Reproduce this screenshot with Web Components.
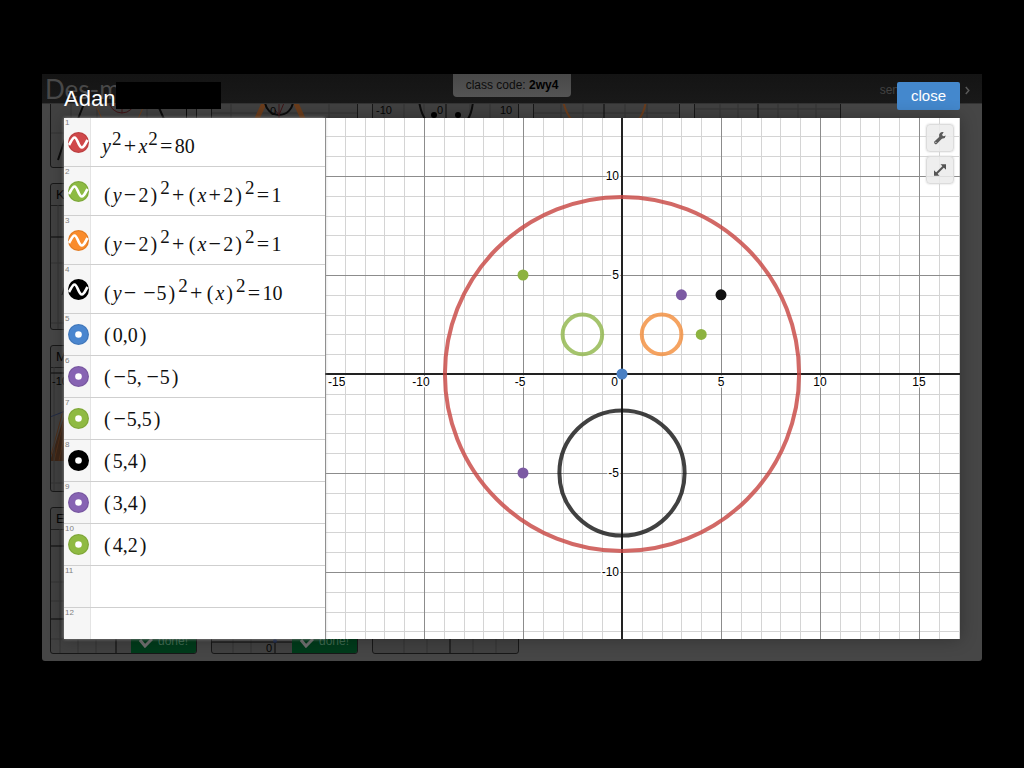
<!DOCTYPE html>
<html lang="en">
<head>
<meta charset="utf-8">
<title>Class graphs</title>
<style>
  html, body { margin: 0; background: #000; font-family: "Liberation Sans", Arial, sans-serif; }
</style>
</head>
<body>
<class-app></class-app>

<script>
const define = (name, html, setup) => {
  const template = document.createElement('template');
  template.innerHTML = html;
  customElements.define(name, class extends HTMLElement {
    connectedCallback() {
      if (this.shadowRoot) return;
      this.attachShadow({ mode: 'open' }).append(template.content.cloneNode(true));
      if (setup) setup(this.shadowRoot, this);
    }
  });
};

/* Top bar of the class page */
define('class-header', `
  <style>
    :host { display: grid; grid-template-columns: 1fr auto 1fr; height: 30px; background: linear-gradient(#141414, #191919); border-bottom: 1px solid #333; box-sizing: border-box; }
    .logo { font: 26px/30px Lato, sans-serif; color: #484848; padding-left: 3px; white-space: nowrap; }
    .code { height: 23px; box-sizing: border-box; padding: 0 13px; border-radius: 0 0 4px 4px; background: linear-gradient(#484848, #545454); color: #0c0c0c; font-size: 12px; line-height: 23px; white-space: nowrap; }
    .code b { color: #000; }
    .send { display: flex; justify-content: flex-end; align-items: center; gap: 66px; padding-right: 12px; color: #424242; font-size: 12px; line-height: 32px; }
    svg { display: block; }
  </style>
  <div class="logo">Des-m</div>
  <div class="code">class code: <b>2wy4</b></div>
  <div class="send"><span>sen</span>
    <svg width="5" height="9" viewBox="0 0 5 9" fill="none" stroke="#585858" stroke-width="1.5"><path d="M.8 1l3 3.5-3 3.5"/></svg>
  </div>`);

/* One student's thumbnail */
define('student-card', `
  <style>
    :host { display: grid; grid-template: 22px 1fr / 1fr; box-sizing: border-box; position: relative; height: 147px; border: 1px solid #181818; border-radius: 3px; overflow: hidden; background: #414141; }
    .name { padding-left: 5px; font-size: 13px; line-height: 21px; color: #050505; border-bottom: 1px solid #202020; }
    ::slotted(svg) { position: absolute; left: -1px; top: -1px; width: 147px; height: 147px; }
    .done { display: none; position: absolute; right: 0; bottom: 0; width: 65px; height: 24px; box-sizing: border-box; padding: 0 8px; background: #003b1b; color: #3f6a50; font-size: 12px; line-height: 22px; align-items: center; justify-content: space-between; }
    :host([done]) .done { display: flex; }
  </style>
  <div class="name"><slot name="name"></slot></div>
  <slot></slot>
  <div class="done"><svg width="14" height="14" viewBox="0 0 14 14" fill="none" stroke="#707070" stroke-width="3"><path d="M1 6l5 6 7-7"/></svg><span>done!</span></div>`);

define('card-wall', `
  <style>
    :host { display: grid; grid-template-columns: repeat(5, 147px); column-gap: 14px; row-gap: 15px; align-content: end; padding: 0 8px; overflow: hidden; box-sizing: border-box; }
    text { font: 11px "Liberation Sans", Arial, sans-serif; fill: #050505; }
    .g { stroke: #343434; } .k { stroke: #0b0b0b; } .o { stroke: #6b3d1c; } .r { stroke: #3f1416; }
  </style>
  <student-card><svg viewBox="0 0 147 147" fill="none">
    <path class="g" d="M0 112H147M21 22V147M47 22V147M97 22V147"/>
    <path class="k" stroke-width="2" d="M35 80l-7 18M106 80l8 18M8 139l8-24"/>
    <path class="o" d="M44 80l8 18M96 80l-8 18"/>
    <circle class="r" cx="72" cy="79" r="13"/><path class="r" d="M72 75v17M60 84h25"/>
    <path class="k" d="M136.500 82V147"/></svg></student-card>
  <student-card><svg viewBox="0 0 147 147" fill="none">
    <path class="g" d="M0 92H147M20 22V147M118 22V147"/>
    <path class="o" stroke-width="5" d="M55 78l-10 22M83 78l10 22"/>
    <circle class="k" cx="68" cy="80" r="14" stroke-width="2"/><path class="r" d="M68 80v17M64 89l4 5 5-12"/>
    <text x="59" y="94">0</text></svg></student-card>
  <student-card><svg viewBox="0 0 147 147" fill="none">
    <path class="g" d="M12 22V147M32 22V147M52 22V147M98 22V147M118 22V147"/>
    <path class="k" d="M74 22V147"/><path class="k" stroke-width="2" d="M47 80q2 13 7 19M101 80q-1 13-6 19"/>
    <circle cx="62" cy="94" r="3" fill="#000"/><circle cx="86" cy="94" r="3" fill="#000"/>
    <text x="4" y="93">-10</text><text x="65" y="93">0</text><text x="128" y="93">10</text></svg></student-card>
  <student-card><svg viewBox="0 0 147 147" fill="none">
    <path class="g" d="M0 92H147M28 22V147M50 22V147M92 22V147M114 22V147"/>
    <path class="k" d="M71 22V147"/><path class="o" stroke-width="2" d="M30 80q3 12 8 18M113 80q-2 12-7 18"/></svg></student-card>
  <student-card><svg viewBox="0 0 147 147" fill="none">
    <path class="g" d="M0 88H147M26 22V147M44 22V147M84 22V147M104 22V147M122 22V147"/>
    <path class="k" d="M64 22V147"/></svg></student-card>

  <student-card style="grid-column: 1"><span slot="name">K</span><svg viewBox="0 0 147 147" fill="none">
    <path class="g" d="M0 80H20M0 140H20M8 22V147"/><path class="k" d="M0 54H20M12 112l3-10"/></svg></student-card>
  <student-card style="grid-column: 1"><span slot="name">M</span><svg viewBox="0 0 147 147" fill="none">
    <path d="M0 116L20 52V116z" fill="#3c2618"/><path d="M1 110l12-44M4 116l12-50M9 116l8-40" stroke="#50301a"/>
    <path class="g" d="M0 138H20M4 22V147"/><path class="k" d="M0 28H20"/><path d="M0 72L18 65" stroke="#222b45"/>
    <text x="2" y="40">-10</text></svg></student-card>
  <student-card style="grid-column: 1" done><span slot="name">E</span><svg viewBox="0 0 147 147" fill="none">
    <path class="g" d="M0 75H20M0 94H20M0 132H147M10 22V147M28 130V147M46 130V147"/><path class="k" d="M0 39H20M0 112H20M66 22V147"/></svg></student-card>
  <student-card done><svg viewBox="0 0 147 147" fill="none">
    <path class="g" d="M22 130V147M40 130V147"/><path class="k" d="M0 135H147M64 22V147"/><circle cx="64" cy="134" r="2" fill="#202c4c"/>
    <text x="55" y="145">0</text></svg></student-card>
  <student-card><svg viewBox="0 0 147 147" fill="none">
    <path class="g" d="M32 22V147M55 22V147M101 22V147M124 22V147"/><path class="k" d="M78 22V147"/></svg></student-card>`);

/* One line of the expression list: its number, its colour and what it shows */
define('expression-row', `
  <style>
    :host { display: grid; grid-template: minmax(0, 1fr) / 27px 1fr; flex: none; height: 42px; box-sizing: border-box; border-bottom: 1px solid #cfcfcf; background: #fff; }
    :host([kind="curve"]) { height: 49px; }
    .gutter { position: relative; display: flex; align-items: center; padding-left: 4px; background: #f6f6f6; border-right: 1px solid #e4e4e4; }
    .num { position: absolute; left: 1px; top: 1px; font-size: 8px; line-height: 8px; color: #808080; }
    button { display: block; padding: 0; border: 0; background: none; }
    button[hidden] { display: none; }
    svg { display: block; }
    .point, .curve { display: none; }
    :host([kind="curve"]) .curve, :host([kind="point"]) .point { display: inline; }
    .math { padding-left: 11px; font: 20px/42px "Liberation Serif", "Times New Roman", serif; color: #111; white-space: nowrap; }
    :host([kind="curve"]) .math { line-height: 56px; }
    .math sup { font-size: 19px; line-height: 0; vertical-align: 8px; margin-left: 1px; }
    .math i { font-style: italic; }
    .math i.op, .math i.neg { display: inline-block; width: 17px; text-align: center; font-style: normal; font-size: 22px; line-height: 20px; }
    .math i.neg { width: 14px; }
    .math i.apart { margin-left: 4px; }
    .math .p { margin: 0 2px; }
  </style>
  <div class="gutter"><span class="num"></span>
    <button type="button"><svg width="21" height="21" viewBox="0 0 21 21">
      <circle cx="10.500" cy="10.500" r="10.500" fill="var(--c)"/><circle cx="10.500" cy="10.500" r="9.800" fill="none" stroke="#000" stroke-opacity=".12"/>
      <path class="curve" d="M1 13C3 10 4.500 5.500 6.500 5.500c3 0 4 10 7.300 10 2.400 0 3.700-4 5.700-7.500" fill="none" stroke="#fff" stroke-width="2.700"/>
      <circle class="point" cx="10.500" cy="10.500" r="3.300" fill="#fff"/></svg></button>
  </div>
  <div class="math"></div>`,
  (root, host) => {
    root.querySelector('.num').textContent = host.getAttribute('number');
    const button = root.querySelector('button');
    button.hidden = !host.hasAttribute('kind');
    button.setAttribute('aria-label', 'Show or hide expression ' + host.getAttribute('number'));
    button.style.setProperty('--c', host.getAttribute('color') || '#000');
    /* ^ marks a square, ~ a leading minus */
    root.querySelector('.math').innerHTML = (host.getAttribute('math') || '').replace(/[()xy+=~^-]/g, (c, i, all) =>
      c === '^' ? '<sup>2</sup>' : c === '~' ? '<i class="neg' + (/[,-]/.test(all[i - 1]) ? ' apart' : '') + '">−</i>' : c === '-' ? '<i class="op">−</i>' :
      /[()]/.test(c) ? '<span class="p">' + c + '</span>' : /[xy]/.test(c) ? '<i>' + c + '</i>' : '<i class="op">' + c + '</i>');
  });

define('expression-list', `
  <style>
    :host { display: flex; flex-direction: column; overflow: hidden; background: #fff; box-shadow: 0 0 3px #999; position: relative; }
  </style>
  <expression-row number="1" kind="curve" color="#d0484a" math="y^+x^=80"></expression-row>
  <expression-row number="2" kind="curve" color="#8dbb43" math="(y-2)^+(x+2)^=1"></expression-row>
  <expression-row number="3" kind="curve" color="#fa8c2c" math="(y-2)^+(x-2)^=1"></expression-row>
  <expression-row number="4" kind="curve" color="#000" math="(y-~5)^+(x)^=10"></expression-row>
  <expression-row number="5" kind="point" color="#4a86cf" math="(0,0)"></expression-row>
  <expression-row number="6" kind="point" color="#8763b3" math="(~5,~5)"></expression-row>
  <expression-row number="7" kind="point" color="#8fba42" math="(~5,5)"></expression-row>
  <expression-row number="8" kind="point" color="#000" math="(5,4)"></expression-row>
  <expression-row number="9" kind="point" color="#8763b3" math="(3,4)"></expression-row>
  <expression-row number="10" kind="point" color="#8fba42" math="(4,2)"></expression-row>
  <expression-row number="11"></expression-row>
  <expression-row number="12"></expression-row>`);

define('graph-paper', `
  <style>
    :host { display: block; position: relative; overflow: hidden; background: #fff; }
    .plot { display: block; width: 100%; height: 100%; }
    .plot text { font: 12px "Liberation Sans", Arial, sans-serif; fill: #000; stroke: #fff; stroke-width: 3px; paint-order: stroke; }
    .tools { position: absolute; top: 6px; right: 6px; display: grid; gap: 4px; }
    .tools button { display: grid; place-items: center; width: 28px; height: 28px; padding: 0; border: 1px solid #dcdcdc; border-radius: 4px; background: rgba(235, 235, 235, .86); box-shadow: 0 0 2px #ccc; }
  </style>
  <svg class="plot" viewBox="-297 -256 635 521" preserveAspectRatio="xMidYMid slice">
    <g id="grid" shape-rendering="crispEdges"></g><g id="labels"></g><g id="shapes" fill="none" stroke-width="4"></g>
  </svg>
  <div class="tools">
    <button type="button" aria-label="Graph settings"><svg width="14" height="14" viewBox="0 0 14 14"><path d="M2.800 11.500L8 6.300" stroke="#5a5a5a" stroke-width="3.200" stroke-linecap="round"/><path d="M10.700 1.200A3.500 3.500 0 0 0 6.300 5.800 3.500 3.500 0 0 0 12.800 4.400L10.500 5.300 8.900 3.900z" fill="#5a5a5a"/><circle cx="2.900" cy="11.300" r=".6" fill="#eee"/></svg></button>
    <button type="button" aria-label="Expand"><svg width="14" height="14" viewBox="0 0 14 14"><path d="M3 11l8-8" stroke="#555" stroke-width="2"/><path d="M7.500 1.200H13v5.500zM1 7.300v5.500h5.500z" fill="#555"/></svg></button>
  </div>`,
  root => {
    const unit = 19.8, at = n => Math.round(n * unit);
    let grid = '', heavy = '';
    for (let n = -30; n <= 30; n++) {
      const p = at(n);
      const lines = `<path d="M${p} -600V600M-600 ${p}H600" stroke="${n % 5 ? '#d4d4d4' : '#8c8c8c'}"/>`;
      if (n % 5) grid += lines; else if (n) heavy += lines;
    }
    let labels = '<text x="-4" y="12" text-anchor="end">0</text><text x="-294" y="12">-15</text>';
    for (const n of [-10, -5, 5, 10, 15]) labels += `<text x="${n < 0 ? at(n) - 3 : at(n)}" y="12" text-anchor="middle">${n}</text>`;
    for (const n of [-10, -5, 5, 10]) labels += `<text x="-3" y="${4 - at(n)}" text-anchor="end">${n}</text>`;
    root.getElementById('grid').innerHTML = grid + heavy + '<path d="M0 -600V600M-600 0H600" stroke="#222" stroke-width="2"/>';
    root.getElementById('labels').innerHTML = labels;
    const circle = (x, y, r2, c) => `<circle cx="${x * unit}" cy="${-y * unit}" r="${Math.sqrt(r2) * unit}" stroke="${c}"/>`;
    const point = (x, y, c) => `<circle cx="${x * unit}" cy="${-y * unit}" r="5.500" fill="${c}" stroke="none"/>`;
    root.getElementById('shapes').innerHTML =
      circle(0, 0, 80, '#c74440cc') + circle(-2, 2, 1, '#8fb548cc') + circle(2, 2, 1, '#f28c3acc') + circle(0, -5, 10, '#111111cc') +
      point(0, 0, '#4a80c4') + point(-5, -5, '#7c5aa3') + point(-5, 5, '#8db340') + point(5, 4, '#111') + point(3, 4, '#7c5aa3') + point(4, 2, '#8db340');
  });

/* A student's graph, opened over the class page */
define('graph-dialog', `
  <style>
    :host { display: flex; flex-direction: column; gap: 8px; padding: 8px 22px 22px; box-sizing: border-box; }
    header { display: flex; align-items: stretch; height: 28px; }
    h1 { margin: 0; font-size: 22px; line-height: 34px; font-weight: 400; color: #fff; }
    .hidden-name { width: 105px; height: 27px; margin-left: 1px; background: #000; }
    button { margin-left: auto; width: 63px; padding: 0; border: 0; border-radius: 2px; background: #4488cd; color: #fff; font: 15px/28px "Liberation Sans", Arial, sans-serif; }
    main { flex: 1; min-height: 0; display: grid; grid-template: minmax(0, 1fr) / 261px minmax(0, 1fr); box-shadow: 0 0 16px rgba(0, 0, 0, .3); }
    expression-list { z-index: 1; }
  </style>
  <header><h1>Adan</h1><div class="hidden-name"></div><button type="button">close</button></header>
  <main><expression-list></expression-list><graph-paper></graph-paper></main>`);

define('class-app', `
  <style>
    :host { display: flex; box-sizing: border-box; height: 100vh; min-height: 500px; padding: 74px 42px 107px; background: #000; }
    .window { position: relative; flex: 1; min-width: 0; display: flex; flex-direction: column; border-radius: 0 0 3px 3px; overflow: hidden; background: #464646; }
    card-wall { flex: 1; min-height: 0; padding-bottom: 7px; }
    graph-dialog { position: absolute; inset: 0; }
  </style>
  <div class="window"><class-header></class-header><card-wall></card-wall><graph-dialog></graph-dialog></div>`);
</script>
</body>
</html>
